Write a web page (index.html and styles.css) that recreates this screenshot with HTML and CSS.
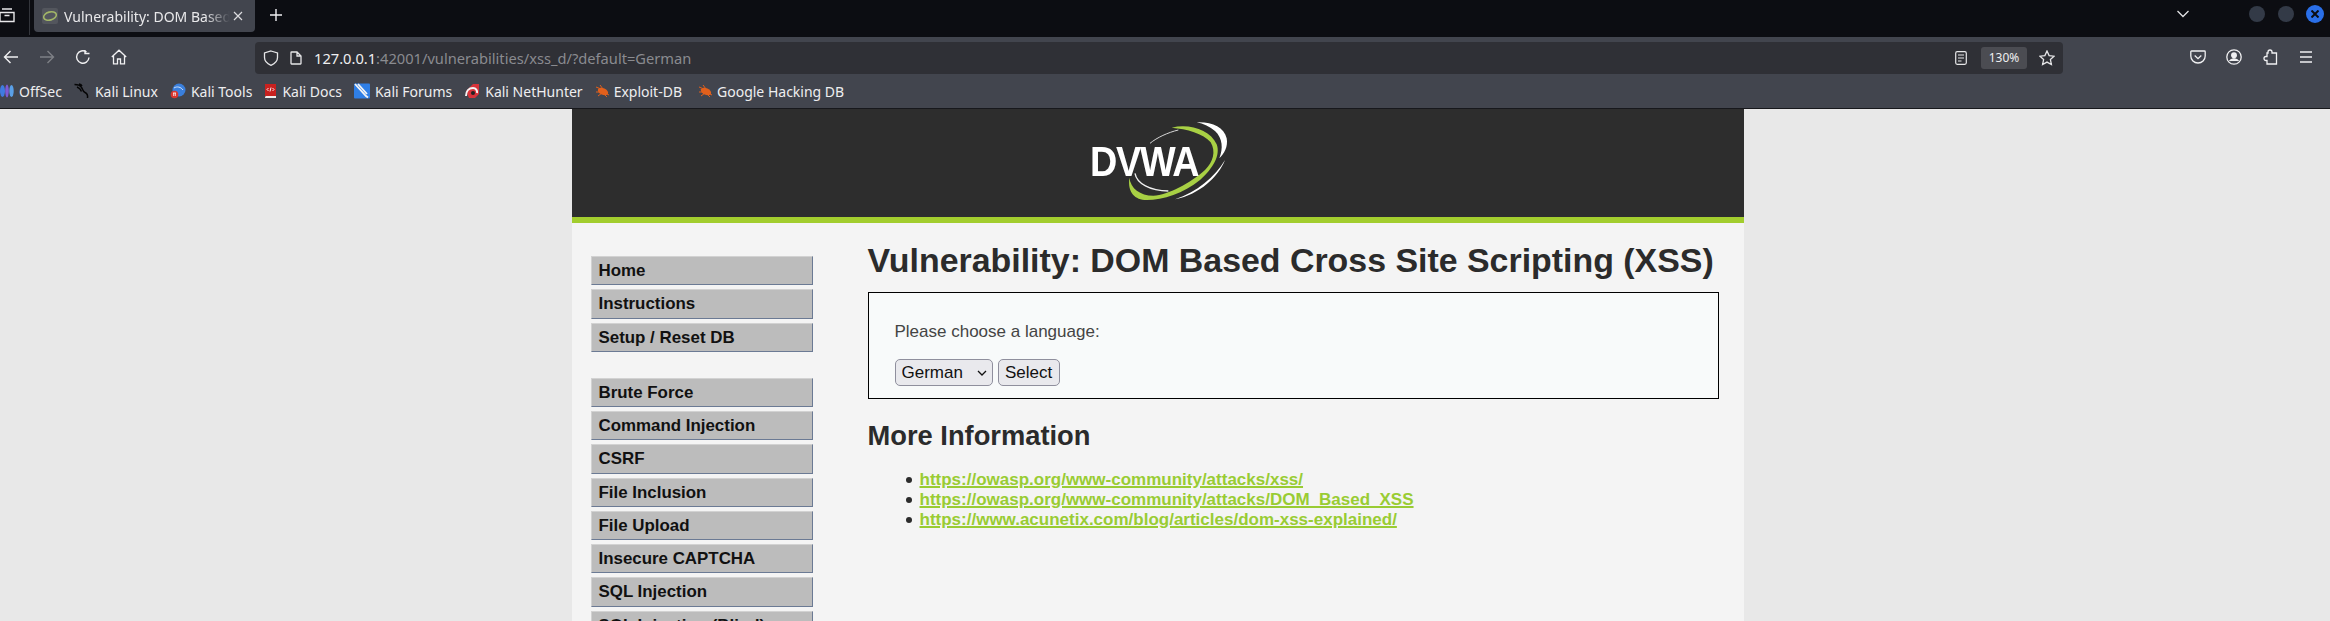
FILE: index.html
```html
<!DOCTYPE html>
<html lang="en">
<head>
  <meta charset="UTF-8">
  <title>Vulnerability: DOM Based Cross Site Scripting (XSS)</title>
  <link rel="stylesheet" href="styles.css">
</head>
<body>

  <div class="tabbar">
    <div class="tab-list-btn">
      <svg width="16" height="16" viewBox="0 0 16 16" fill="none" stroke="#e8e8ea" stroke-width="1.4"><path d="M3 2h10M1 5.500h14v9H1zM5.500 8.500h5"/></svg>
    </div>
    <div class="tab-sep"></div>
    <div class="tab">
      <div class="tab-icon">
        <svg width="16" height="16" viewBox="0 0 16 16" fill="none"><ellipse cx="8" cy="8" rx="6.500" ry="4" stroke="#a2b668" stroke-width="1.600" transform="rotate(-15 8 8)"/></svg>
      </div>
      <span class="tab-title">Vulnerability: DOM Based</span>
      <svg class="tab-close" width="10" height="10" viewBox="0 0 10 10" stroke="#dcdcdf" stroke-width="1.200"><path d="M1 1l8 8M9 1l-8 8"/></svg>
    </div>
    <svg class="new-tab" width="12" height="12" viewBox="0 0 12 12" stroke="#f0f0f2" stroke-width="1.400"><path d="M6 0v12M0 6h12"/></svg>
    <div class="window-btns">
      <svg class="tabs-chevron" width="12" height="8" viewBox="0 0 12 8" fill="none" stroke="#e2e2e4" stroke-width="1.300"><path d="M0.500 1l5.500 5.500L11.500 1"/></svg>
      <span class="win-dot"></span>
      <span class="win-dot"></span>
      <span class="win-dot win-close">
        <svg width="8" height="8" viewBox="0 0 8 8" stroke="#0c0d12" stroke-width="2"><path d="M0.500 0.500l7 7M7.500 0.500l-7 7"/></svg>
      </span>
    </div>
  </div>

  <div class="navbar">
    <div class="nav-btn">
      <svg width="16" height="16" viewBox="0 0 16 16" fill="none" stroke="#f0f0f2" stroke-width="1.400"><path d="M15 8H1.500M7.500 2L1.500 8l6 6"/></svg>
    </div>
    <div class="nav-btn">
      <svg width="16" height="16" viewBox="0 0 16 16" fill="none" stroke="#7e8086" stroke-width="1.400"><path d="M1 8h13.500M8.500 2l6 6-6 6"/></svg>
    </div>
    <div class="nav-btn">
      <svg width="16" height="16" viewBox="0 0 16 16" fill="none" stroke="#f0f0f2" stroke-width="1.400"><path d="M14 8.500A6.200 6.200 0 1 1 11.500 3M10 1v3.500h4.500"/></svg>
    </div>
    <div class="nav-btn">
      <svg width="16" height="16" viewBox="0 0 16 16" fill="none" stroke="#f0f0f2" stroke-width="1.300"><path d="M0.800 8L8 1.200 15.200 8M2.500 7v7.800h4V10h3v4.800h4V7"/></svg>
    </div>

    <div class="urlbar">
      <svg class="url-icon" width="16" height="16" viewBox="0 0 16 16" fill="none" stroke="#e6e6e8" stroke-width="1.300"><path d="M8 1l6.500 2v4.500C14.500 11.500 11 14 8 15.300 5 14 1.500 11.500 1.500 7.500V3z"/></svg>
      <svg class="url-icon doc" width="12" height="14" viewBox="0 0 12 14" fill="none" stroke="#e6e6e8" stroke-width="1.300"><path d="M1 1.500c0-.3.200-.5.500-.5H7l4 4v7.500c0 .3-.2.500-.5.500h-9c-.3 0-.5-.2-.5-.5zM7 1v4h4"/></svg>
      <span class="url-text">127.0.0.1<span class="url-dim">:42001/vulnerabilities/xss_d/?default=German</span></span>
      <svg class="url-reader" width="12" height="14" viewBox="0 0 12 14" fill="none" stroke="#e6e6e8" stroke-width="1.200"><rect x="0.700" y="0.700" width="10.600" height="12.600" rx="1.500"/><path d="M3 4h6M3 7h6M3 10h3.500"/></svg>
      <span class="zoom-level">130%</span>
      <svg class="url-star" width="16" height="16" viewBox="0 0 16 16" fill="none" stroke="#e6e6e8" stroke-width="1.300"><path d="M8 1l2.100 4.600 5 .6-3.700 3.400 1 5L8 12.100 3.600 14.600l1-5L.900 6.200l5-.6z"/></svg>
    </div>

    <div class="nav-btn">
      <svg width="16" height="14" viewBox="0 0 16 14" fill="none" stroke="#f0f0f2" stroke-width="1.300"><path d="M1.500 1h13c.4 0 .7.300.7.700V6c0 4-3.200 7-7.200 7S.800 10 .800 6V1.700c0-.4.300-.7.700-.7zM4.700 5.500L8 8.700l3.300-3.200"/></svg>
    </div>
    <div class="nav-btn">
      <svg width="16" height="16" viewBox="0 0 16 16" fill="none" stroke="#f0f0f2" stroke-width="1.300"><circle cx="8" cy="8" r="7.200"/><circle cx="8" cy="6.300" r="2.300" fill="#f0f0f2"/><path d="M3.500 12c1-1.700 2.500-2.200 4.500-2.200s3.500.5 4.500 2.200" fill="#f0f0f2"/></svg>
    </div>
    <div class="nav-btn">
      <svg width="15" height="16" viewBox="0 0 15 16" fill="none" stroke="#f0f0f2" stroke-width="1.300"><path d="M7 1c1.300 0 2 .9 2 2v1h4.500v11H4v-3.500H3c-1.200 0-2-.8-2-2s.8-2 2-2h1V4h1V3c0-1.100.7-2 2-2z"/></svg>
    </div>
    <div class="nav-btn">
      <svg width="14" height="12" viewBox="0 0 14 12" stroke="#f0f0f2" stroke-width="1.400"><path d="M1 1h12M1 6h12M1 11h12"/></svg>
    </div>
  </div>

  <div class="bookmarks">
    <div class="bm">
      <svg width="14" height="14" viewBox="0 0 14 14"><ellipse cx="2.500" cy="7" rx="2.500" ry="6" fill="#3f7be0"/><ellipse cx="7" cy="7" rx="1.800" ry="6.500" fill="#7d5ad6"/><ellipse cx="11.500" cy="7" rx="2.200" ry="6" fill="#5aa0e8"/></svg>
      OffSec
    </div>
    <div class="bm">
      <svg width="16" height="16" viewBox="0 0 16 16" fill="none" stroke="#050506" stroke-width="1.500"><path d="M0.500 1.500c3 0 5.500.5 7 2.800C9 6.500 8.500 8.500 11 9.500c2.300 1 3 2.500 2.500 5.500M3 4c2.300.8 3.800 2.500 4.500 4.500M5 1c1.500.3 2.500 1 3 2"/></svg>
      Kali Linux
    </div>
    <div class="bm">
      <svg width="16" height="16" viewBox="0 0 16 16"><circle cx="9" cy="7" r="6.500" fill="#3a7fdc"/><path d="M4 5c3-2 7-1 9 2" stroke="#cfe2fa" fill="none"/><circle cx="4.500" cy="11.500" r="3.800" fill="#d9362e"/><path d="M3 10h3M3.700 10v3M5.300 10v3" stroke="#fff" stroke-width=".8"/></svg>
      Kali Tools
    </div>
    <div class="bm">
      <svg width="13" height="16" viewBox="0 0 13 16"><path d="M1 1h11v12H2.500C1.700 13 1 13.700 1 14.500z" fill="#c8211f"/><path d="M1 14.500C1 13.700 1.700 13 2.500 13H12v2H2.500C1.700 15 1 15.200 1 14.500z" fill="#eee"/><path d="M4.500 5L3 6.500 4.500 8M8.500 5L10 6.500 8.500 8M7 4.500L6 8.500" stroke="#fff" fill="none" stroke-width=".9"/></svg>
      Kali Docs
    </div>
    <div class="bm">
      <svg width="16" height="16" viewBox="0 0 16 16"><rect width="16" height="15" y="0.500" rx="1" fill="#2f7fe6"/><path d="M1 1l11 12 2 1.500M4 1l9 10" stroke="#f4f4f4" stroke-width="1.800" fill="none"/></svg>
      Kali Forums
    </div>
    <div class="bm">
      <svg width="16" height="16" viewBox="0 0 16 16"><path d="M2 8l7-7h6v10l-4 4H5z" fill="#d8333a"/><path d="M2 13c0-5 3-8 7-8 3 0 4.500 2.500 4 5" stroke="#f4f4f4" stroke-width="2" fill="none"/><circle cx="9" cy="10" r="2" fill="#222"/></svg>
      Kali NetHunter
    </div>
    <div class="bm bm-tight">
      <svg width="15" height="14" viewBox="0 0 15 14"><ellipse cx="8" cy="7.500" rx="5.500" ry="3.300" fill="#e2601c" transform="rotate(25 8 7.500)"/><path d="M1 3l5 2M5 1l3 4M1 8h5M3 12l4-3M12 13l-3-3M14 11l-4-2" stroke="#e2601c"/></svg>
      Exploit-DB
    </div>
    <div class="bm bm-tight bm-last">
      <svg width="15" height="14" viewBox="0 0 15 14"><ellipse cx="8" cy="7.500" rx="5.500" ry="3.300" fill="#e2601c" transform="rotate(25 8 7.500)"/><path d="M1 3l5 2M5 1l3 4M1 8h5M3 12l4-3M12 13l-3-3M14 11l-4-2" stroke="#e2601c"/></svg>
      Google Hacking DB
    </div>
  </div>

  <div class="viewport">
    <div class="container">
      <div class="header">
        <div class="logo">
          <svg class="logo-swoosh" width="240" height="125" viewBox="0 0 720 375">
            <path d="M470 52C515 50 552 65 560 100 565 125 552 148 538 160 550 130 548 100 525 78 510 65 490 56 470 52z" fill="#fff"/>
            <path d="M555 165C535 215 480 268 405 283 470 262 525 215 555 165z" fill="#fff"/>
            <path d="M395 68C450 55 510 75 530 118 542 150 520 190 480 225 430 265 370 285 320 285 285 285 262 262 268 218 272 250 300 272 340 272 385 270 450 235 495 195 520 170 528 140 512 112 490 85 440 72 395 68z" fill="#a8d044"/>
            <path d="M330 115C350 98 385 82 415 75" stroke="#d8d8d8" stroke-width="3" fill="none"/>
            <path d="M285 205C290 235 330 258 385 258" stroke="#f0f0f0" stroke-width="4" fill="none"/>
          </svg>
          <span class="logo-text">DVWA</span>
        </div>
      </div>

      <div class="body-row">
        <div class="sidebar">
          <ul class="menu">
            <li><a href="#">Home</a></li>
            <li><a href="#">Instructions</a></li>
            <li><a href="#">Setup / Reset DB</a></li>
          </ul>
          <ul class="menu">
            <li><a href="#">Brute Force</a></li>
            <li><a href="#">Command Injection</a></li>
            <li><a href="#">CSRF</a></li>
            <li><a href="#">File Inclusion</a></li>
            <li><a href="#">File Upload</a></li>
            <li><a href="#">Insecure CAPTCHA</a></li>
            <li><a href="#">SQL Injection</a></li>
            <li><a href="#">SQL Injection (Blind)</a></li>
          </ul>
        </div>

        <div class="main">
          <h1>Vulnerability: DOM Based Cross Site Scripting (XSS)</h1>
          <div class="vuln-box">
            <p>Please choose a language:</p>
            <form class="lang-form">
              <select class="lang-select">
                <option>German</option>
              </select>
              <button type="button" class="lang-btn">Select</button>
            </form>
          </div>
          <h2>More Information</h2>
          <ul class="links">
            <li><a href="#">https://owasp.org/www-community/attacks/xss/</a></li>
            <li><a href="#">https://owasp.org/www-community/attacks/DOM_Based_XSS</a></li>
            <li><a href="#">https://www.acunetix.com/blog/articles/dom-xss-explained/</a></li>
          </ul>
        </div>
      </div>
    </div>
  </div>

</body>
</html>
```

FILE: styles.css
```css
body {
  margin: 0;
  height: 621px;
  overflow: hidden;
  display: flex;
  flex-direction: column;
  background: #e8e8e8;
  font-family: "Noto Sans", sans-serif;
}

/* browser chrome */
.tabbar {
  height: 37px;
  flex: none;
  background: #0c0d12;
  display: flex;
  align-items: flex-start;
  color: #e8e8ea;
}

.tab-list-btn {
  width: 28px;
  height: 30px;
  margin-left: -7px;
  display: flex;
  align-items: center;
  justify-content: center;
}

.tab-sep {
  width: 1px;
  height: 35px;
  margin-left: 8px;
  background: #33353b;
}

.tab {
  width: 221px;
  height: 32px;
  margin-left: 4px;
  background: #42454e;
  border-radius: 0 0 4px 4px;
  display: flex;
  align-items: center;
  padding: 0 8px;
  box-sizing: border-box;
  font-size: 14px;
}

.tab-icon {
  width: 16px;
  height: 16px;
  flex: none;
  background: #53565d;
  border-radius: 2px;
}

.tab-title {
  margin-left: 6px;
  width: 166px;
  flex: none;
  white-space: nowrap;
  -webkit-mask-image: linear-gradient(to right, #000 85%, transparent);
  mask-image: linear-gradient(to right, #000 85%, transparent);
}

.tab-close {
  margin-left: 3px;
  flex: none;
}

.new-tab {
  margin: 9px 0 0 15px;
}

.window-btns {
  margin-left: auto;
  display: flex;
  align-items: center;
  height: 28px;
  padding-right: 6px;
}

.tabs-chevron {
  margin-right: 47px;
}

.win-dot {
  width: 16px;
  height: 16px;
  border-radius: 50%;
  background: #333a47;
  margin-left: 13px;
  display: flex;
  align-items: center;
  justify-content: center;
}

.win-close {
  background: #2a6fe8;
  width: 18px;
  height: 18px;
  margin-left: 12px;
}

.navbar {
  height: 37px;
  flex: none;
  background: #42454e;
  display: flex;
  align-items: center;
  padding-right: 6px;
}

.nav-btn {
  width: 36px;
  height: 32px;
  flex: none;
  display: flex;
  align-items: center;
  justify-content: center;
  margin-top: 3px;
}

.navbar .nav-btn:first-child {
  margin-left: -7px;
}

.urlbar {
  flex: 1;
  height: 32px;
  margin: 4px 117px 0 118px;
  background: #2f3036;
  border-radius: 4px;
  display: flex;
  align-items: center;
  font-size: 14.67px;
  color: #eeeef0;
}

.url-icon {
  margin-left: 8px;
  flex: none;
}

.url-icon.doc {
  margin-left: 11px;
}

.url-text {
  margin-left: 12px;
}

.url-dim {
  color: #8a8b90;
}

.url-reader {
  margin-left: auto;
}

.zoom-level {
  margin-left: 14px;
  width: 46px;
  height: 22px;
  line-height: 22px;
  text-align: center;
  font-size: 12px;
  background: #4b4c52;
  border-radius: 3px;
}

.url-star {
  margin: 0 8px 0 12px;
}

.bookmarks {
  height: 34px;
  flex: none;
  background: #42454e;
  display: flex;
  align-items: center;
  font-size: 14px;
  color: #eeeef0;
  border-bottom: 1px solid #17181c;
}

.bm {
  display: flex;
  align-items: center;
  gap: 5px;
  margin-right: 12px;
  white-space: nowrap;
}

.bm-tight {
  gap: 4px;
}

.bm-last {
  margin-left: 4px;
}

/* page */
.viewport {
  flex: 1;
  min-height: 0;
  display: flex;
  justify-content: center;
  overflow: hidden;
  padding-right: 15px;
  font-family: "Liberation Sans", Arial, sans-serif;
}

.container {
  width: 1172px;
  background: #f4f4f4;
  flex: none;
}

.header {
  height: 108px;
  background: #2d2d2d;
  border-bottom: 6px solid #a2cd2e;
  display: flex;
  justify-content: center;
}

.logo {
  position: relative;
  width: 240px;
  height: 108px;
  margin-left: 4px;
}

.logo-swoosh {
  position: absolute;
  left: 0;
  top: -4px;
}

.logo-text {
  position: absolute;
  left: 50px;
  top: 28px;
  font-size: 43px;
  font-weight: bold;
  letter-spacing: -1.500px;
  color: #fff;
  transform: scaleX(0.88);
  transform-origin: left center;
}

.body-row {
  display: flex;
}

.sidebar {
  width: 222px;
  flex: none;
  margin: 33px 0 0 19px;
}

.menu {
  list-style: none;
  margin: 0 0 26px;
  padding: 0;
  display: flex;
  flex-direction: column;
  gap: 4px;
}

.menu a {
  display: block;
  height: 29.280px;
  box-sizing: border-box;
  padding-left: 7px;
  background: #bcbcbc;
  border: 1px solid;
  border-color: #d2d2d2 #6b7a94 #6b7a94 #d2d2d2;
  color: #111;
  font-size: 16.900px;
  font-weight: bold;
  line-height: 27px;
  text-decoration: none;
}

.main {
  flex: 1;
  margin-left: 55px;
  margin-right: 25px;
  color: #2b2b2b;
}

h1 {
  margin: 17px 0 0;
  font-size: 33.900px;
  line-height: 40px;
  font-weight: bold;
  white-space: nowrap;
}

.vuln-box {
  margin-top: 12px;
  padding: 27px 26px 14px;
  height: 107px;
  box-sizing: border-box;
  background: #f8fafa;
  border: 1px solid #000;
}

.vuln-box p {
  margin: 0;
  font-size: 17px;
  line-height: 24px;
  color: #444;
}

.lang-form {
  display: flex;
  gap: 5px;
  margin-top: 15px;
}

.lang-select {
  appearance: none;
  width: 98px;
  height: 27px;
  padding: 0 0 0 6px;
  font: 17px "Liberation Sans", Arial, sans-serif;
  color: #111;
  background: #e9e9ed url("data:image/svg+xml,%3Csvg xmlns='http://www.w3.org/2000/svg' width='10' height='6' fill='none' stroke='%23111' stroke-width='1.300'%3E%3Cpath d='M1 1l4 4 4-4'/%3E%3C/svg%3E") no-repeat 81px 10px;
  border: 1px solid #8f8f9d;
  border-radius: 5px;
}

.lang-btn {
  width: 62px;
  height: 27px;
  padding: 0;
  font: 17px "Liberation Sans", Arial, sans-serif;
  color: #111;
  background: #e9e9ed;
  border: 1px solid #8f8f9d;
  border-radius: 5px;
}

h2 {
  margin: 21px 0 0;
  font-size: 27.300px;
  line-height: 32px;
  font-weight: bold;
}

.links {
  list-style: none;
  margin: 18px 0 0;
  padding-left: 38px;
  font-size: 17px;
  line-height: 20px;
}

.links li {
  display: flex;
  align-items: center;
  gap: 8px;
}

.links li::before {
  content: "";
  width: 6px;
  height: 6px;
  border-radius: 50%;
  background: #2b2b2b;
}

.links a {
  color: #99cc33;
  font-weight: bold;
  text-decoration-thickness: 2px;
}
```
